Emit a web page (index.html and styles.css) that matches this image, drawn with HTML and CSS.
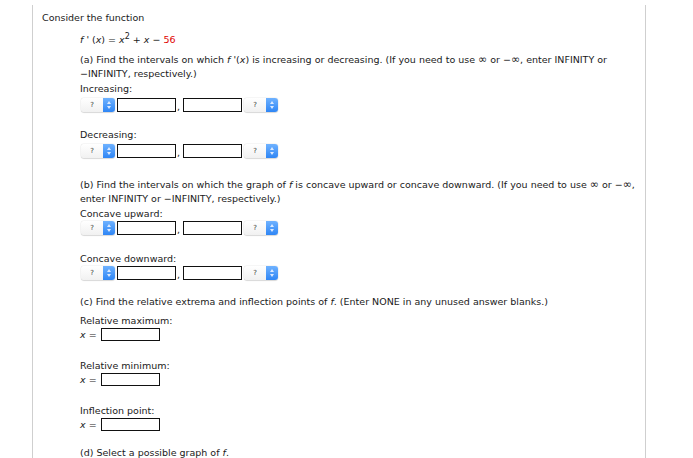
FILE: index.html
```html
<!DOCTYPE html>
<html>
<head>
<meta charset="utf-8">
<link rel="stylesheet" href="styles.css">
</head>
<body>
<div class="page">
  <div class="question">
    <p class="intro">Consider the function</p>
    <div class="body">
      <p class="formula"><i>f</i> ' (<i>x</i>) = <i>x</i><sup>2</sup> + <i>x</i> − <span class="red">56</span></p>

      <p class="para">(a) Find the intervals on which <i>f</i> '(<i>x</i>) is increasing or decreasing. (If you need to use <span class="inf">∞</span> or −<span class="inf">∞</span>, enter INFINITY or −INFINITY, respectively.)</p>
      <p class="label">Increasing:</p>
      <div class="row">
        <span class="sel"><span class="q">?</span><span class="btn"></span></span>
        <span class="box"></span><span class="comma">,</span><span class="box"></span>
        <span class="sel"><span class="q">?</span><span class="btn"></span></span>
      </div>
      <p class="label spaced">Decreasing:</p>
      <div class="row">
        <span class="sel"><span class="q">?</span><span class="btn"></span></span>
        <span class="box"></span><span class="comma">,</span><span class="box"></span>
        <span class="sel"><span class="q">?</span><span class="btn"></span></span>
      </div>

      <p class="para part-b">(b) Find the intervals on which the graph of <i>f</i> is concave upward or concave downward. (If you need to use <span class="inf">∞</span> or −<span class="inf">∞</span>, enter INFINITY or −INFINITY, respectively.)</p>
      <p class="label">Concave upward:</p>
      <div class="row tight">
        <span class="sel"><span class="q">?</span><span class="btn"></span></span>
        <span class="box"></span><span class="comma">,</span><span class="box"></span>
        <span class="sel"><span class="q">?</span><span class="btn"></span></span>
      </div>
      <p class="label spaced-b">Concave downward:</p>
      <div class="row tight">
        <span class="sel"><span class="q">?</span><span class="btn"></span></span>
        <span class="box"></span><span class="comma">,</span><span class="box"></span>
        <span class="sel"><span class="q">?</span><span class="btn"></span></span>
      </div>

      <p class="para part-c">(c) Find the relative extrema and inflection points of <i>f</i>. (Enter NONE in any unused answer blanks.)</p>
      <p class="label top4">Relative maximum:</p>
      <div class="xrow"><span class="xeq"><i>x</i> =</span><span class="box small"></span></div>
      <p class="label xspaced">Relative minimum:</p>
      <div class="xrow"><span class="xeq"><i>x</i> =</span><span class="box small"></span></div>
      <p class="label xspaced">Inflection point:</p>
      <div class="xrow"><span class="xeq"><i>x</i> =</span><span class="box small"></span></div>

      <p class="para part-d">(d) Select a possible graph of <i>f</i>.</p>
    </div>
  </div>
</div>
</body>
</html>
```

FILE: styles.css
```css
html, body {
  margin: 0;
  padding: 0;
  background: #fff;
}
body {
  font-family: "DejaVu Sans", Verdana, sans-serif;
  font-size: 9.5px;
  line-height: 14px;
  color: #1a1a1a;
}
.page {
  padding-top: 5px;
  padding-left: 32px;
  height: 453px;
  overflow: hidden;
}
.question {
  width: 603px;
  height: 470px;
  border-left: 1px solid #cfcfcf;
  border-right: 1px solid #cfcfcf;
  padding-left: 9px;
  padding-top: 6px;
}
p {
  margin: 0;
}
.body {
  padding-left: 38px;
}
.formula {
  margin-top: 8px;
}
.formula sup {
  font-size: 8px;
  line-height: 0;
  vertical-align: 4px;
}
.red {
  color: #e00000;
}
.inf {
  font-size: 11px;
  line-height: 0;
}
.para {
  margin-top: 6px;
  width: 562px;
}
.para.part-b {
  margin-top: 20px;
}
.para.part-c {
  margin-top: 15px;
}
.para.part-d {
  margin-top: 15px;
}
.label {
  margin-top: 1px;
}
.label.spaced {
  margin-top: 16px;
}
.label.spaced-b {
  margin-top: 17px;
}
.label.top4 {
  margin-top: 5px;
}
.label.xspaced {
  margin-top: 18px;
}
.row {
  display: flex;
  align-items: center;
  height: 15px;
  margin-top: 1px;
  margin-left: 1px;
}
.row.tight {
  margin-top: -1px;
}
.sel {
  display: flex;
  width: 34px;
  height: 14px;
  border-radius: 3px;
  background: linear-gradient(#ffffff, #f1f1f1);
  box-shadow: 0 0 1px rgba(0,0,0,0.35), 0 1px 1px rgba(0,0,0,0.12);
  overflow: hidden;
}
.sel .q {
  flex: 1;
  text-align: center;
  font-size: 7px;
  line-height: 14px;
  color: #333;
}
.sel .btn {
  position: relative;
  width: 12px;
  height: 14px;
  background: linear-gradient(#6fb2ff, #2f86f5);
}
.sel .btn::before,
.sel .btn::after {
  content: "";
  position: absolute;
  left: 4px;
  border-left: 2px solid transparent;
  border-right: 2px solid transparent;
}
.sel .btn::before {
  top: 3px;
  border-bottom: 3px solid #dceaff;
}
.sel .btn::after {
  top: 8px;
  border-top: 3px solid #dceaff;
}
.box {
  display: inline-block;
  box-sizing: border-box;
  width: 59px;
  height: 14px;
  border: 1px solid #111;
  background: #fff;
}
.row .sel + .box {
  margin-left: 2px;
}
.row .box + .sel {
  margin-left: 2px;
}
.comma {
  width: 7px;
  text-align: left;
  padding-left: 1px;
  box-sizing: border-box;
  align-self: flex-end;
  line-height: 10px;
}
.xrow {
  display: flex;
  align-items: center;
  height: 13px;
  margin-top: 0;
}
.xeq {
  width: 21px;
  padding-left: 0;
}
.box.small {
  width: 59px;
  height: 13px;
}
```
